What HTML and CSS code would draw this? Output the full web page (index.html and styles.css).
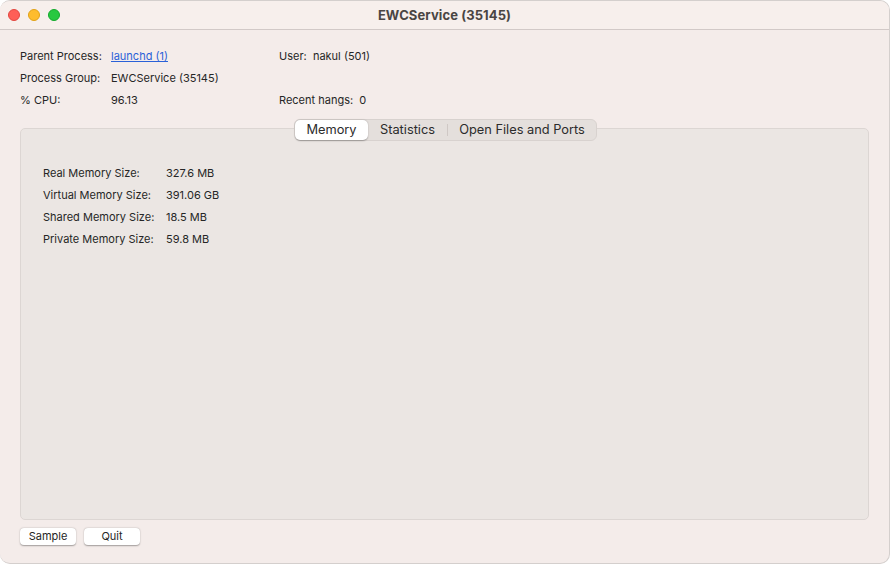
FILE: index.html
```html
<!DOCTYPE html>
<html>
<head>
<meta charset="utf-8">
<link rel="stylesheet" href="styles.css">
</head>
<body>
<div class="window">
  <div class="titlebar">
    <div class="lights">
      <span class="light red"></span>
      <span class="light yellow"></span>
      <span class="light green"></span>
    </div>
    <div class="title">EWCService (35145)</div>
  </div>
  <div class="content">
    <div class="info">
      <div class="col col1">
        <div class="row"><span class="lbl">Parent Process:</span><a class="link">launchd (1)</a></div>
        <div class="row"><span class="lbl">Process Group:</span><span>EWCService (35145)</span></div>
        <div class="row"><span class="lbl">% CPU:</span><span>96.13</span></div>
      </div>
      <div class="col col2">
        <div class="row">User:&nbsp; nakul (501)</div>
        <div class="row"></div>
        <div class="row">Recent hangs:&nbsp; 0</div>
      </div>
    </div>
    <div class="panel">
      <div class="tabs">
        <span class="tab active">Memory</span>
        <span class="tab t2">Statistics</span>
        <span class="sep"></span>
        <span class="tab t3">Open Files and Ports</span>
      </div>
      <div class="mem">
        <div class="mrow"><span class="mlbl">Real Memory Size:</span><span>327.6 MB</span></div>
        <div class="mrow"><span class="mlbl">Virtual Memory Size:</span><span>391.06 GB</span></div>
        <div class="mrow"><span class="mlbl">Shared Memory Size:</span><span>18.5 MB</span></div>
        <div class="mrow"><span class="mlbl">Private Memory Size:</span><span>59.8 MB</span></div>
      </div>
    </div>
    <div class="buttons">
      <button class="btn b1">Sample</button>
      <button class="btn b2">Quit</button>
    </div>
  </div>
</div>
</body>
</html>
```
FILE: styles.css
```css
html, body {
  margin: 0;
  padding: 0;
  background: #ffffff;
}
body {
  width: 890px;
  height: 564px;
  overflow: hidden;
  font-family: Inter, "Liberation Sans", sans-serif;
  color: #262626;
}
.window {
  width: 890px;
  height: 564px;
  box-sizing: border-box;
  border-radius: 10px;
  border: 1px solid #d4cfcd;
  border-left: none;
  background: #f4ecea;
  overflow: hidden;
  display: flex;
  flex-direction: column;
}
.titlebar {
  height: 28px;
  flex: none;
  background: #f7efec;
  border-bottom: 1px solid #d2c9c7;
  position: relative;
  display: flex;
  align-items: center;
  justify-content: center;
}
.lights {
  position: absolute;
  left: 8px;
  top: 8px;
  display: flex;
  gap: 8px;
}
.light {
  width: 12px;
  height: 12px;
  border-radius: 50%;
  box-sizing: border-box;
}
.red { background: #fe5f57; border: 0.5px solid #e2463f; }
.yellow { background: #febc2e; border: 0.5px solid #e1a116; }
.green { background: #28c840; border: 0.5px solid #13a92b; }
.title {
  font-size: 13px;
  font-weight: 700;
  color: #4a4543;
  letter-spacing: 0.1px;
}
.content {
  flex: 1;
  display: flex;
  flex-direction: column;
  padding: 15px 20px 0 20px;
}
.info {
  display: flex;
  font-size: 11px;
  height: 83px;
  flex: none;
}
.col1 { width: 259px; }
.row {
  height: 22px;
  line-height: 22px;
  display: flex;
  white-space: nowrap;
}
.lbl { width: 91px; }
.link {
  color: #2a61d8;
  text-decoration: underline;
}
.panel {
  width: 849px;
  height: 392px;
  flex: none;
  box-sizing: border-box;
  background: #ebe6e3;
  border: 1px solid #dcd6d3;
  border-radius: 5px;
  position: relative;
  padding-top: 33px;
  padding-left: 22px;
}
.tabs {
  position: absolute;
  left: 273px;
  top: -10px;
  height: 22px;
  width: 303px;
  box-sizing: border-box;
  background: #e4dfdc;
  border: 1px solid #d8d2cf;
  border-radius: 6px;
  display: flex;
  align-items: center;
  font-size: 12.8px;
  color: #2b2b2b;
}
.tab {
  height: 20px;
  line-height: 20px;
  text-align: center;
}
.tab.active {
  width: 73px;
  background: #ffffff;
  border-radius: 5px;
  box-shadow: 0 0.5px 1.5px rgba(0,0,0,0.3);
}
.t2 { width: 79px; }
.sep {
  width: 1px;
  height: 12px;
  background: #cfc8c5;
}
.t3 { flex: 1; }
.mem {
  font-size: 11px;
}
.mrow {
  height: 22px;
  line-height: 22px;
  display: flex;
}
.mlbl { width: 123px; }
.buttons {
  display: flex;
  gap: 8px;
  margin-top: 8px;
}
.btn {
  height: 17px;
  padding: 0;
  font-family: Inter, "Liberation Sans", sans-serif;
  font-size: 11px;
  color: #262626;
  background: #ffffff;
  border: none;
  border-radius: 4px;
  box-shadow: 0 0.5px 1.5px rgba(0,0,0,0.35);
  line-height: 17px;
}
.b1 { width: 56px; }
.b2 { width: 56px; }
```
